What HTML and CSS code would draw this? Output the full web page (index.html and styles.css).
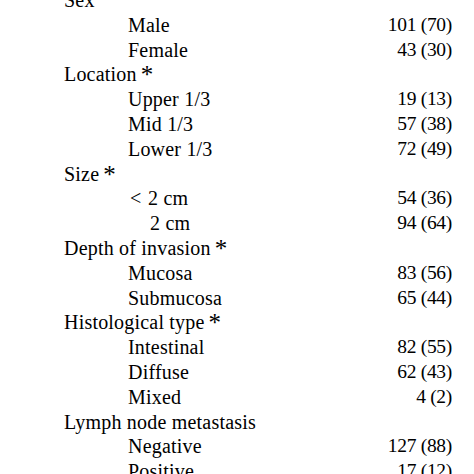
FILE: index.html
```html
<!DOCTYPE html>
<html>
<head>
<meta charset="utf-8">
<link rel="stylesheet" href="styles.css">
</head>
<body>
<div class="table">
  <div class="cat">Sex</div><div class="num"></div>
  <div class="sub">Male</div><div class="num">101 (70)</div>
  <div class="sub">Female</div><div class="num">43 (30)</div>
  <div class="cat">Location<span class="ast">*</span></div><div class="num"></div>
  <div class="sub">Upper 1/3</div><div class="num">19 (13)</div>
  <div class="sub">Mid 1/3</div><div class="num">57 (38)</div>
  <div class="sub">Lower 1/3</div><div class="num">72 (49)</div>
  <div class="cat">Size<span class="ast">*</span></div><div class="num"></div>
  <div class="sub"><span class="lt">&lt;</span>2 cm</div><div class="num">54 (36)</div>
  <div class="sub"><span class="ge"></span>2 cm</div><div class="num">94 (64)</div>
  <div class="cat">Depth of invasion<span class="ast">*</span></div><div class="num"></div>
  <div class="sub">Mucosa</div><div class="num">83 (56)</div>
  <div class="sub">Submucosa</div><div class="num">65 (44)</div>
  <div class="cat">Histological type<span class="ast">*</span></div><div class="num"></div>
  <div class="sub">Intestinal</div><div class="num">82 (55)</div>
  <div class="sub">Diffuse</div><div class="num">62 (43)</div>
  <div class="sub">Mixed</div><div class="num">4 (2)</div>
  <div class="cat">Lymph node metastasis</div><div class="num"></div>
  <div class="sub">Negative</div><div class="num">127 (88)</div>
  <div class="sub">Positive</div><div class="num">17 (12)</div>
</div>
</body>
</html>
```
FILE: styles.css
```css
html, body {
  margin: 0;
  padding: 0;
  background: #fff;
}
body {
  font-family: "Liberation Serif", "Times New Roman", serif;
  font-size: 20px;
  color: #000;
  overflow: hidden;
  height: 474px;
}
.table {
  display: grid;
  grid-template-columns: 1fr auto;
  grid-auto-rows: 24.8px;
  line-height: 24.8px;
  margin-top: -12px;
  padding-left: 64px;
  padding-right: 22px;
  white-space: nowrap;
}
.cat, .sub {
  letter-spacing: 0.2px;
}
.sub {
  padding-left: 64px;
}
.num {
  text-align: right;
  font-size: 19.5px;
  letter-spacing: -0.3px;
}
.ast {
  display: inline-block;
  font-size: 25px;
  line-height: 14px;
  height: 14px;
  margin-left: 4px;
  vertical-align: -2px;
  letter-spacing: 0;
}
.lt {
  display: inline-block;
  width: 18px;
  padding-left: 2px;
}
.ge {
  display: inline-block;
  width: 22px;
}
```
